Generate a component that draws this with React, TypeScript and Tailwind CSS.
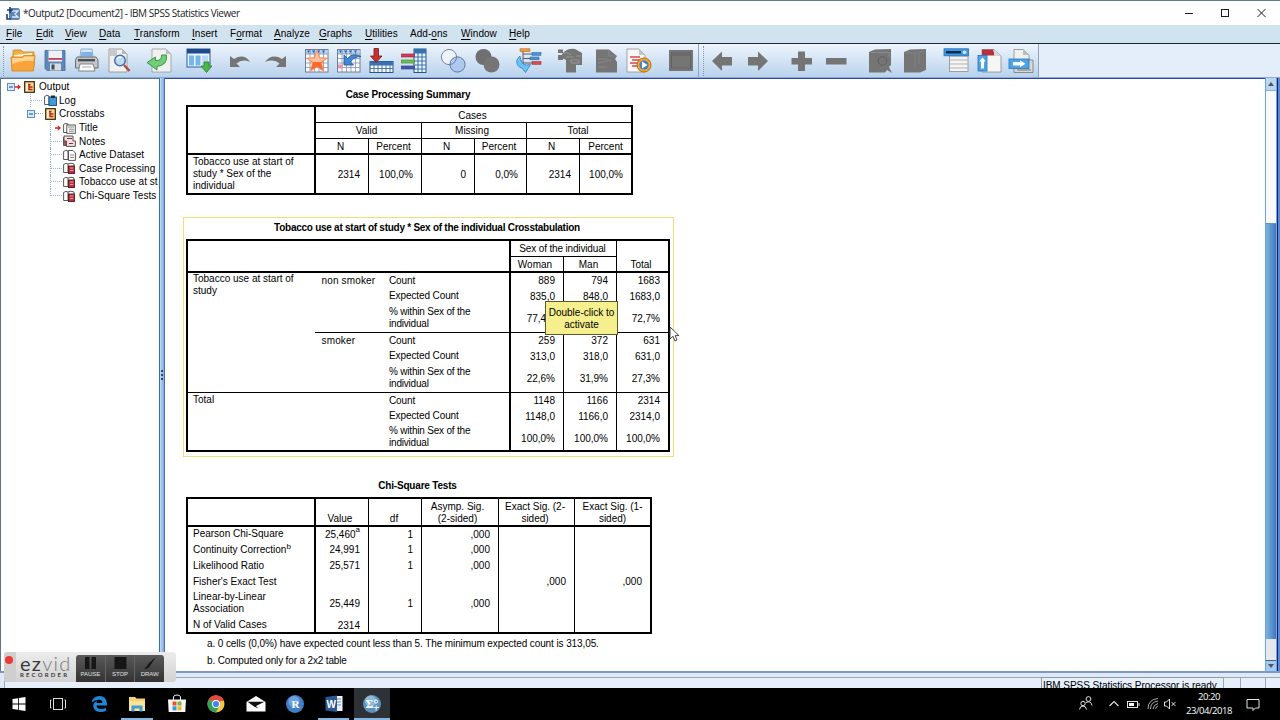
import type { ReactNode } from "react";
import clsx from "clsx";

type IconProps = { children: ReactNode };

const ToolIcon = ({ children }: IconProps) => (
    <svg width="26" height="26" viewBox="0 0 26 26" className="block shrink-0">
        {children}
    </svg>
);

const GRAY = "#757575";

/* Toolbar drawings */

const OpenIcon = () => (
    <ToolIcon>
        <path d="M3 5 V3 Q3 2 4 2 H11 L13 4 H24 V18 H3 Z" fill="#f0b043" stroke="#c98325" strokeWidth="0.8" />
        <path d="M4 7 L22 5 V12 H4 Z" fill="#fff3cf" />
        <path d="M1 9 H12 L14 7.5 H25 L23.5 23 H2 Z" fill="#f9a43a" stroke="#d47f1c" strokeWidth="0.8" />
        <path d="M2 10 H12.5 L14.5 8.5 H24 L23.6 13 Q12 12 2.4 16 Z" fill="#ffd391" />
    </ToolIcon>
);

const SaveIcon = () => (
    <ToolIcon>
        <path d="M2 2.5 H22 V22.5 H4 L2 20.5 Z" fill="#5f87b8" stroke="#466a99" strokeWidth="0.8" />
        <rect x="5.5" y="2.5" width="13.5" height="11" fill="#eef2f6" />
        <rect x="5.5" y="10" width="13.5" height="1.8" fill="#c2405a" />
        <rect x="7" y="15.5" width="11" height="7" fill="#d9dde2" />
        <rect x="8.5" y="16.5" width="3" height="5" fill="#3d4c60" />
    </ToolIcon>
);

const PrintIcon = () => (
    <ToolIcon>
        <path d="M7 1 H18 L19 9 H6 Z" fill="#d5e9fb" stroke="#7ba0c6" strokeWidth="0.8" />
        <path d="M7.5 4 H18 L18.6 8 H7 Z" fill="#7db3e6" />
        <path d="M3 9 H22 L24 12 V20 H1.5 V12 Z" fill="#c4c7ca" stroke="#606468" strokeWidth="0.9" />
        <rect x="4" y="11" width="17" height="2.4" fill="#4b4f53" />
        <path d="M6 16 H19 L21 23 H4.5 Z" fill="#fafafa" stroke="#6b6e72" strokeWidth="0.8" />
        <rect x="8" y="18" width="9" height="2" fill="#cfd3d8" />
    </ToolIcon>
);

const PreviewIcon = () => (
    <ToolIcon>
        <path d="M3 1 H16 L21 6 V24 H3 Z" fill="#f1f1f1" stroke="#8d8d8d" strokeWidth="0.8" />
        <path d="M3.5 1.5 H11 V8 H3.5 Z" fill="#c9c9c9" />
        <path d="M16 1 V6 H21 Z" fill="#b9b9b9" />
        <line x1="18" y1="17" x2="23.5" y2="23" stroke="#b8453b" strokeWidth="2.4" />
        <circle cx="14" cy="12.5" r="5.3" fill="#bcdcf8" stroke="#4771a8" strokeWidth="1.5" />
        <path d="M11 11 Q12.5 8.5 15.5 9.5" stroke="#fff" strokeWidth="1.4" fill="none" />
    </ToolIcon>
);

const ExportIcon = () => (
    <ToolIcon>
        <path d="M6 1 H20 L25 6 V24 H6 Z" fill="#f1f1f1" stroke="#9a9a9a" strokeWidth="0.8" />
        <path d="M20 1 V6 H25 Z" fill="#bdbdbd" />
        <path d="M20.5 7 Q22 17 11 18.5 V22 L1 14.5 L9.5 9 V12.5 Q16 13 15.5 7 Z" fill="#72cc78" stroke="#2f8f42" strokeWidth="0.9" />
    </ToolIcon>
);

const PivotIcon = () => (
    <ToolIcon>
        <rect x="1" y="1" width="23" height="18" fill="#eaf4fd" stroke="#2b5d9b" />
        <rect x="1" y="1" width="23" height="4.5" fill="#1f4a8c" />
        <rect x="3" y="7.5" width="5" height="10" fill="#75b6ea" />
        <rect x="9.5" y="7.5" width="5" height="10" fill="#75b6ea" />
        <rect x="16" y="7.5" width="6" height="10" fill="#b8daf4" />
        <path d="M18 14 H23 V18 H26 L20.5 24.5 L15 18 H18 Z" fill="#4db649" stroke="#2a7d2c" strokeWidth="0.8" />
    </ToolIcon>
);

const UndoIcon = () => (
    <ToolIcon>
        <path d="M3 8 V19 H13 L9.5 15.5 Q15 10.5 23 14 Q17 5 7 11 Z" fill={GRAY} />
    </ToolIcon>
);

const RedoIcon = () => (
    <ToolIcon>
        <path d="M23 8 V19 H13 L16.5 15.5 Q11 10.5 2 14 Q9 5 19 11 Z" fill={GRAY} />
    </ToolIcon>
);

const GridBase = () => (
    <>
        <rect x="1.5" y="1.5" width="22.5" height="22.5" fill="#fdfdfe" stroke="#6d7f99" />
        <rect x="2" y="2" width="21.5" height="4" fill="#b5d0ee" />
        <path d="M2 6 H24 M2 10.5 H24 M2 15 H24 M2 19.5 H24 M6 2 V24 M10.5 2 V24 M15 2 V24 M19.5 2 V24" stroke="#7f92ae" strokeWidth="0.8" />
        <path d="M3 2.5 H6 L4.5 5 Z M8 2.5 H11 L9.5 5 Z M13 2.5 H16 L14.5 5 Z M18 2.5 H21 L19.5 5 Z" fill="#2c62ad" />
    </>
);

const StarIcon = () => (
    <ToolIcon>
        <GridBase />
        <path d="M13 2 L15.8 9.5 L23.5 10 L17.6 15 L20 23.5 L13 19 L6 23.5 L8.4 15 L2.5 10 L10.2 9.5 Z" fill="#fb6a2b" stroke="#f7a57f" strokeWidth="0.7" />
        <path d="M13 3.5 L15.3 10.2 L22 10.5 L17 14 H8.5 L4 10.5 L10.7 10.2 Z" fill="#fdc09d" />
    </ToolIcon>
);

const GotoIcon = () => (
    <ToolIcon>
        <GridBase />
        <rect x="2" y="16.5" width="5" height="4" fill="#e896ac" />
        <path d="M8 7 V17 H17.5 L14.5 14 Q18 8.5 25 8.5 Q17 4 11.5 10.5 Z" fill="#3f88d6" stroke="#1d5598" strokeWidth="0.8" />
    </ToolIcon>
);

const InsertCaseIcon = () => (
    <ToolIcon>
        <rect x="2" y="13.5" width="23" height="11" fill="#f2f7fc" stroke="#27568c" />
        <rect x="2" y="13.5" width="23" height="4" fill="#3672b0" />
        <path d="M2 20.5 H25 M6 17 V24 M10 17 V24 M14 17 V24 M18 17 V24 M22 17 V24" stroke="#466f9f" strokeWidth="0.9" />
        <path d="M6 0.5 H10.5 V8 H14 L8.2 14.5 L2.5 8 H6 Z" fill="#c6302f" stroke="#7d1615" strokeWidth="0.8" />
    </ToolIcon>
);

const InsertVarIcon = () => (
    <ToolIcon>
        <rect x="13" y="1" width="12" height="23.5" fill="#eaf3fb" stroke="#27568c" />
        <rect x="13" y="1" width="12" height="4.5" fill="#3672b0" />
        <path d="M13 9 H25 M13 13 H25 M13 17 H25 M13 21 H25 M17 5 V24 M21 5 V24" stroke="#3f75ae" strokeWidth="1.1" />
        <rect x="0.5" y="6" width="13" height="3" fill="#d63a55" stroke="#8b2236" strokeWidth="0.6" />
        <rect x="0.5" y="12" width="13" height="3" fill="#6cc24e" stroke="#3d7d2a" strokeWidth="0.6" />
        <rect x="0.5" y="18" width="13" height="3" fill="#4a56b5" stroke="#2a3380" strokeWidth="0.6" />
    </ToolIcon>
);

const VennIcon = () => (
    <ToolIcon>
        <circle cx="9" cy="9" r="7.6" fill="#edf3fa" stroke="#7c8594" />
        <circle cx="17.5" cy="16.5" r="7.6" fill="#a9c4f0" fillOpacity="0.85" stroke="#5d75a6" />
        <path d="M16.5 9 A7.6 7.6 0 0 1 9.9 16.6" fill="none" stroke="#5d75a6" strokeWidth="0.8" />
    </ToolIcon>
);

const VennGrayIcon = () => (
    <ToolIcon>
        <circle cx="8.5" cy="9" r="8" fill="#6f6f6f" />
        <circle cx="16.5" cy="16.5" r="8" fill={GRAY} />
    </ToolIcon>
);

const SelectOutputIcon = () => (
    <ToolIcon>
        <path d="M7 2 V18 M7 6 H16 M7 10.5 H15 M7 15 H16" stroke="#4d4d4d" strokeWidth="0.9" fill="none" />
        <rect x="4" y="0.8" width="10" height="2.8" fill="#f1993a" stroke="#a95f15" strokeWidth="0.5" />
        <rect x="16" y="4.5" width="9" height="2.8" fill="#4b93dc" stroke="#265a95" strokeWidth="0.5" />
        <rect x="14" y="9" width="9" height="2.8" fill="#4b93dc" stroke="#265a95" strokeWidth="0.5" />
        <rect x="16" y="13.5" width="9" height="2.8" fill="#d84a51" stroke="#8b262b" strokeWidth="0.5" />
        <path d="M4 8 Q-1 12 1.5 17 Q3.5 20 6 20 L9.5 24.5 L14.5 16.5 L10.5 17 Q5 17 4 8 Z" fill="#6fc0f5" stroke="#2c83c7" strokeWidth="0.8" />
    </ToolIcon>
);

const GrayPagesIcon = () => (
    <ToolIcon>
        <path d="M1 1.5 H6 V5 H1 Z M1 7 H6 V12 H1 Z" fill={GRAY} />
        <path d="M5 6 Q10 0 18 1 L25 5 V17 H19 V24.5 H9 V12 L5 10 Z" fill={GRAY} />
        <path d="M9 9 H17 M19 8 H24 M14 12 H22 V15 H14 Z M7 5 Q11 4 14 7" stroke="#9b9b9b" strokeWidth="0.9" fill="none" />
    </ToolIcon>
);

const GrayDocIcon = () => (
    <ToolIcon>
        <path d="M2 1.5 H15 L23 8 L21 11 L23 14 V24.5 H2 Z" fill={GRAY} />
        <path d="M4 11 H14 M4 15 L18 12 M4 19 H13 M15 2 V8 H22" stroke="#8a8a8a" strokeWidth="0.9" fill="none" />
    </ToolIcon>
);

const RunScriptIcon = () => (
    <ToolIcon>
        <path d="M1 1 H13 L19 7 V24 H1 Z" fill="#f7f7f7" stroke="#939393" strokeWidth="0.8" />
        <path d="M13 1 V7 H19 Z" fill="#c4c4c4" />
        <path d="M4 9 H14 M6 12 H14 M4 15 H12 M6 18 H11" stroke="#d0494f" strokeWidth="1.3" />
        <circle cx="18" cy="17" r="7" fill="#f5a62c" stroke="#b76c12" />
        <circle cx="18" cy="17" r="4.6" fill="#3f83c5" />
        <path d="M16 13.5 L21.5 17 L16 20.5 Z" fill="#fff" />
    </ToolIcon>
);

const GrayWindowIcon = () => (
    <ToolIcon>
        <rect x="1" y="2" width="24" height="21" fill={GRAY} />
        <rect x="3.5" y="7" width="19" height="13" fill="none" stroke="#5c5c5c" strokeWidth="0.8" />
        <path d="M3 5 H23" stroke="#5c5c5c" strokeWidth="0.8" />
    </ToolIcon>
);

const LeftIcon = () => (
    <ToolIcon>
        <path d="M3 13 L13 3.5 V9 H23 V17.5 H13 V23 Z" fill={GRAY} />
    </ToolIcon>
);

const RightIcon = () => (
    <ToolIcon>
        <path d="M23 13 L13 3.5 V9 H3 V17.5 H13 V23 Z" fill={GRAY} />
    </ToolIcon>
);

const PlusIcon = () => (
    <ToolIcon>
        <path d="M10 3.5 H17 V10 H24 V16.5 H17 V23 H10 V16.5 H3.5 V10 H10 Z" fill={GRAY} />
    </ToolIcon>
);

const MinusIcon = () => (
    <ToolIcon>
        <rect x="3" y="10" width="20.5" height="6.5" fill={GRAY} />
    </ToolIcon>
);

const GrayBookIcon = () => (
    <ToolIcon>
        <path d="M2 4 L8 1.5 L24 1 V17 L22 19 L25 25 L20 22 L18 24.5 H2 Z" fill={GRAY} />
        <path d="M4 4.5 H22 V9" stroke="#8d8d8d" strokeWidth="0.9" fill="none" />
        <circle cx="15.5" cy="13" r="4.2" fill="none" stroke="#606060" strokeWidth="1.1" />
    </ToolIcon>
);

const GrayBookPlainIcon = () => (
    <ToolIcon>
        <path d="M1 4 L7 1.5 L23 1 V22 L17 24.5 H1 Z" fill={GRAY} />
        <path d="M2 4.5 L12 5 L22 3 M12 5 V20 M16 4.5 V16" stroke="#858585" strokeWidth="0.9" fill="none" />
    </ToolIcon>
);

const HeadingIcon = () => (
    <ToolIcon>
        <rect x="6.5" y="8" width="18.5" height="15.5" fill="#f4f4f4" stroke="#8c8c8c" strokeWidth="0.8" />
        <path d="M7 12 H25 M7 16 H25 M7 20 H25" stroke="#b3b3b3" />
        <rect x="1" y="0.8" width="24.5" height="7" fill="#4298e0" stroke="#2170b4" strokeWidth="0.8" />
        <rect x="3" y="3" width="15" height="2.5" fill="#0c2c58" />
        <circle cx="21.5" cy="4.3" r="1.8" fill="#d6ecfd" />
    </ToolIcon>
);

const InsertTitleIcon = () => (
    <ToolIcon>
        <path d="M5 1.5 H17 L24 8 V24 H5 Z" fill="#f6f6f6" stroke="#8c8c8c" strokeWidth="0.8" />
        <path d="M5 1.5 H16 L18 7.5 H5 Z" fill="#b5303c" />
        <path d="M17 1.5 V8 H24 Z" fill="#d6d6d6" />
        <rect x="1" y="7.5" width="9" height="15.5" fill="#4ba3e8" stroke="#2574b8" strokeWidth="0.8" />
        <path d="M5.5 9.5 L8.8 13.5 H7 V20.5 H4 V13.5 H2.2 Z" fill="#fff" />
    </ToolIcon>
);

const InsertTextIcon = () => (
    <ToolIcon>
        <path d="M6 1.5 H15 L21 7 V14 H6 Z" fill="#f1f1f1" stroke="#8c8c8c" strokeWidth="0.8" />
        <path d="M15 1.5 V7 H21 Z" fill="#bcbcbc" />
        <path d="M6 12 H25 V24.5 H6 Z" fill="#d8d8d8" stroke="#777" strokeWidth="0.8" />
        <path d="M9 22 H23" stroke="#777" />
        <rect x="1" y="11" width="20" height="9.5" fill="#4ba3e8" stroke="#2574b8" strokeWidth="0.8" />
        <path d="M5 14 H12 V12.2 L17.5 15.7 L12 19.2 V17.4 H5 Z" fill="#fff" />
    </ToolIcon>
);

const outputTools = [
    { id: "open", gap: "ml-[6px]", Icon: OpenIcon },
    { id: "save", gap: "ml-[7px]", Icon: SaveIcon },
    { id: "print", gap: "ml-[5px]", Icon: PrintIcon },
    { id: "preview", gap: "ml-[6px]", Icon: PreviewIcon },
    { id: "export", gap: "ml-[14px]", Icon: ExportIcon },
    { id: "pivot", gap: "ml-[14px]", Icon: PivotIcon },
    { id: "undo", gap: "ml-[15px]", Icon: UndoIcon },
    { id: "redo", gap: "ml-[10px]", Icon: RedoIcon },
    { id: "goto-data", gap: "ml-[15px]", Icon: StarIcon },
    { id: "goto-case", gap: "ml-[6px]", Icon: GotoIcon },
    { id: "insert-case", gap: "ml-[6px]", Icon: InsertCaseIcon },
    { id: "variables", gap: "ml-[7px]", Icon: InsertVarIcon },
    { id: "sets", gap: "ml-[13px]", Icon: VennIcon },
    { id: "all-vars", gap: "ml-[9px]", Icon: VennGrayIcon },
    { id: "select", gap: "ml-[15px]", Icon: SelectOutputIcon },
    { id: "pages", gap: "ml-[15px]", Icon: GrayPagesIcon },
    { id: "doc", gap: "ml-[11px]", Icon: GrayDocIcon },
    { id: "script", gap: "ml-[6px]", Icon: RunScriptIcon },
    { id: "window", gap: "ml-[16px]", Icon: GrayWindowIcon },
];

const outlineTools = [
    { id: "promote", gap: "ml-[5px]", Icon: LeftIcon },
    { id: "demote", gap: "ml-[10px]", Icon: RightIcon },
    { id: "expand", gap: "ml-[17px]", Icon: PlusIcon },
    { id: "collapse", gap: "ml-[9px]", Icon: MinusIcon },
    { id: "show", gap: "ml-[18px]", Icon: GrayBookIcon },
    { id: "hide", gap: "ml-[10px]", Icon: GrayBookPlainIcon },
    { id: "heading", gap: "ml-[14px]", Icon: HeadingIcon },
    { id: "title", gap: "ml-[8px]", Icon: InsertTitleIcon },
    { id: "text", gap: "ml-[5px]", Icon: InsertTextIcon },
];

const menus = [
    { pre: "", key: "F", post: "ile", w: "w-[30px]" },
    { pre: "", key: "E", post: "dit", w: "w-[29px]" },
    { pre: "", key: "V", post: "iew", w: "w-[34px]" },
    { pre: "", key: "D", post: "ata", w: "w-[35px]" },
    { pre: "", key: "T", post: "ransform", w: "w-[58px]" },
    { pre: "", key: "I", post: "nsert", w: "w-[38px]" },
    { pre: "F", key: "o", post: "rmat", w: "w-[44px]" },
    { pre: "", key: "A", post: "nalyze", w: "w-[45px]" },
    { pre: "", key: "G", post: "raphs", w: "w-[46px]" },
    { pre: "", key: "U", post: "tilities", w: "w-[45px]" },
    { pre: "Add-", key: "o", post: "ns", w: "w-[51px]" },
    { pre: "", key: "W", post: "indow", w: "w-[48px]" },
    { pre: "", key: "H", post: "elp", w: "w-[30px]" },
];

const TitleBar = () => (
    <header className="flex h-[25px] items-center border-t border-[#5f7c84] bg-white">
        <svg width="15" height="15" viewBox="0 0 15 15" className="ml-[6px] shrink-0">
            <rect x="3" y="2" width="11" height="12" rx="2.5" fill="#5d86b4" />
            <path d="M6 5 H12 L9 8 L12 11 H6" fill="none" stroke="#dbe8f5" strokeWidth="1.3" />
            <path d="M1 4 H7 M4 1 V7 M1 8 V13 H5" stroke="#1f3e6b" strokeWidth="1.6" fill="none" />
        </svg>
        <h1 className="ml-[2px] font-['Open_Sans',sans-serif] text-[10px] tracking-[-0.43px] whitespace-nowrap text-[#222]">
            *Output2 [Document2] - IBM SPSS Statistics Viewer
        </h1>
        <svg width="90" height="12" viewBox="0 0 90 12" className="mr-[8px] ml-auto" fill="none" stroke="#1c1c1c">
            <path d="M3 6.5 H11" />
            <rect x="39.5" y="2.5" width="7" height="7" />
            <path d="M75.5 2 L83.5 10 M83.5 2 L75.5 10" />
        </svg>
    </header>
);

const MenuBar = () => (
    <nav className="flex h-[19px] items-center border-b border-[#1d2733] bg-[#d2e3f0] pb-[1px] pl-[6px]">
        {menus.map((m) => (
            <span key={m.key + m.post} className={clsx("text-[10px] tracking-[0.05px]", m.w)}>
                {m.pre}
                <span className="underline underline-offset-2">{m.key}</span>
                {m.post}
            </span>
        ))}
    </nav>
);

const Toolbar = () => (
    <div className="flex h-[33px] bg-[#e4eefb]">
        <div className="flex w-[699px] items-center border-r border-[#8fa5bb] bg-linear-to-b from-[#eef5fd] to-[#b9d2ec]">
            <div className="ml-[3px] h-[30px] w-px border-l border-dotted border-[#8798ab]" />
            {outputTools.map(({ id, gap, Icon }) => (
                <div key={id} className={gap}>
                    <Icon />
                </div>
            ))}
        </div>
        <div className="flex w-[340px] items-center border-r border-[#8fa5bb] bg-linear-to-b from-[#eef5fd] to-[#b9d2ec]">
            <div className="ml-[4px] h-[30px] w-px border-l border-dotted border-[#8798ab]" />
            {outlineTools.map(({ id, gap, Icon }) => (
                <div key={id} className={gap}>
                    <Icon />
                </div>
            ))}
        </div>
    </div>
);

/* Outline tree */

const Toggle = () => (
    <svg width="8" height="8" viewBox="0 0 8 8" className="shrink-0">
        <rect x="0.5" y="0.5" width="7" height="7" fill="#d6e9fa" stroke="#5b8fc4" />
        <path d="M2 4 H6" stroke="#1f4f86" />
    </svg>
);

const RedArrow = () => (
    <svg width="6" height="6" viewBox="0 0 6 6" className="shrink-0">
        <path d="M0 2.2 H2.8 V0.3 L6 3 L2.8 5.7 V3.8 H0 Z" fill="#d8232a" />
    </svg>
);

const RootIcon = () => (
    <svg width="11" height="12" viewBox="0 0 11 12" className="shrink-0">
        <rect x="0.7" y="0.7" width="9.6" height="10.6" fill="#fbd98a" stroke="#33240e" strokeWidth="1.2" />
        <path d="M3 2 V10" stroke="#fff" />
        <path d="M4 3.5 H6.5 M5 3 V8.5 H8.5 M5 6 H8.5" stroke="#b3261b" strokeWidth="1.4" fill="none" />
    </svg>
);

const BookIcon = ({ kind }: { kind: string }) => (
    <svg width="13" height="12" viewBox="0 0 13 12" className="shrink-0">
        <path d="M0.6 10.5 V2.5 Q3 0.5 5 2 V10.5 Z" fill={kind === "note" ? "#b5505c" : "#fff"} stroke="#444" strokeWidth="0.9" />
        {kind === "log" && (
            <>
                <rect x="5" y="3" width="7.5" height="8.5" fill="#3f9bd8" stroke="#1b4c75" strokeWidth="0.9" />
                <path d="M7 1.5 H11 V4 H7 Z" fill="#1c2c3c" />
            </>
        )}
        {kind === "title" && (
            <>
                <rect x="3.8" y="3" width="8.5" height="8.3" fill="#fff" stroke="#444" strokeWidth="0.9" />
                <path d="M5 5 H11 M6 7.2 H11 M6 9.2 H11" stroke="#777" strokeWidth="0.9" />
            </>
        )}
        {kind === "note" && (
            <>
                <path d="M1 1 H10 V6 H12.4 V11.4 H3.5 V6 H1 Z" fill="#f2dfe0" stroke="#444" strokeWidth="0.9" />
                <path d="M4 3.5 H9 M6 8.5 H10" stroke="#8d2835" />
            </>
        )}
        {kind === "dataset" && (
            <>
                <path d="M5.5 1.5 H10 L12.4 4 V11.4 H5.5 Z" fill="#fff" stroke="#444" strokeWidth="0.9" />
                <path d="M7 6 H11 M7 8.5 H11" stroke="#777" strokeWidth="0.9" />
            </>
        )}
        {kind === "table" && (
            <>
                <path d="M5 2 Q8 0.4 11 2 V4" stroke="#555" fill="none" />
                <rect x="5.5" y="4" width="6" height="7.5" fill="#b9313d" stroke="#54141b" strokeWidth="0.9" />
                <path d="M7 6 H10.5 M7 8.5 H10.5" stroke="#e9b9bd" strokeWidth="0.8" />
            </>
        )}
    </svg>
);

const outputItems = [
    { label: "Title", kind: "title" },
    { label: "Notes", kind: "note" },
    { label: "Active Dataset", kind: "dataset" },
    { label: "Case Processing", kind: "table" },
    { label: "Tobacco use at st", kind: "table" },
    { label: "Chi-Square Tests", kind: "table" },
];

const Outline = () => (
    <aside className="w-[160px] shrink-0 overflow-hidden border-x border-t border-[#5a7590] border-r-[#3a6ca8] bg-white pt-[1px] text-[10px] tracking-[0.05px] whitespace-nowrap">
        <div className="flex h-[13.6px] items-center pl-[6px]">
            <Toggle />
            <RedArrow />
            <span className="ml-[3px] flex items-center gap-[4px]">
                <RootIcon />
                Output
            </span>
        </div>
        <div className="ml-[29px] flex h-[13.6px] items-center border-l border-dotted border-[#8fb3d6]">
            <div className="mr-[2px] w-[11px] border-t border-dotted border-[#8fb3d6]" />
            <BookIcon kind="log" />
            <span className="ml-[2px]">Log</span>
        </div>
        <div className="flex h-[13.6px] items-center pl-[26px]">
            <Toggle />
            <div className="mr-[2px] w-[8px] border-t border-dotted border-[#8fb3d6]" />
            <RootIcon />
            <span className="ml-[3px]">Crosstabs</span>
        </div>
        {outputItems.map((item, i) => (
            <div key={item.label} className="flex h-[13.6px] pl-[49px]">
                <div className={clsx("border-l border-dotted border-[#8fb3d6]", i === outputItems.length - 1 ? "h-[7px]" : "h-full")} />
                <div className="flex items-center">
                    {i === 0 ? (
                        <div className="flex w-[12px] items-center justify-end pr-[2px]">
                            <RedArrow />
                        </div>
                    ) : (
                        <div className="mr-[1px] w-[11px] border-t border-dotted border-[#8fb3d6]" />
                    )}
                    <BookIcon kind={item.kind} />
                    <span className="ml-[3px]">{item.label}</span>
                </div>
            </div>
        ))}
    </aside>
);

/* Pivot tables */

const TableTitle = ({ children, className }: { children: ReactNode; className: string }) => (
    <h2 className={clsx("h-[14px] text-center text-[10px] leading-[14px] font-bold whitespace-nowrap", className)}>{children}</h2>
);

const Cell = ({ children, className }: { children?: ReactNode; className?: string }) => (
    <div className={clsx("border-black", className)}>{children}</div>
);

const HEAD = "flex items-center justify-center";
const NUM = "flex items-center justify-end pr-[8px]";

const caseValues = ["2314", "100,0%", "0", "0,0%", "2314", "100,0%"];

const CaseProcessing = () => (
    <section className="w-[447px]">
        <TableTitle className="mb-[3px] pr-[3px] tracking-[-0.19px]">Case Processing Summary</TableTitle>
        <div className="grid grid-cols-[128px_53px_53px_53px_52px_53px_51px] grid-rows-[16px_16px_16px_38px] border-2 border-black">
            <Cell className="row-span-3 border-r-2 border-b-2" />
            <Cell className={clsx(HEAD, "col-span-6 border-b pt-[1px] pr-[2px]")}>Cases</Cell>
            <Cell className={clsx(HEAD, "col-span-2 border-r border-b pr-[4px]")}>Valid</Cell>
            <Cell className={clsx(HEAD, "col-span-2 border-r border-b pr-[4px]")}>Missing</Cell>
            <Cell className={clsx(HEAD, "col-span-2 border-b pr-[2px]")}>Total</Cell>
            {["N", "Percent", "N", "Percent", "N", "Percent"].map((h, i) => (
                <Cell key={i} className={clsx(HEAD, "border-b-2 pt-[1px]", i < 5 && "border-r pr-[3px]")}>{h}</Cell>
            ))}
            <Cell className="border-r-2 pt-[1px] pl-[5px] leading-[12px] whitespace-nowrap">
                Tobacco use at start of
                <br />
                study * Sex of the
                <br />
                individual
            </Cell>
            {caseValues.map((v, i) => (
                <Cell key={i} className={clsx(NUM, "pt-[1px]", i < 5 && "border-r")}>{v}</Cell>
            ))}
        </div>
    </section>
);

const crosstab = [
    {
        group: "non smoker",
        rows: [
            ["889", "794", "1683"],
            ["835,0", "848,0", "1683,0"],
            ["77,4%", "68,1%", "72,7%"],
        ],
    },
    {
        group: "smoker",
        rows: [
            ["259", "372", "631"],
            ["313,0", "318,0", "631,0"],
            ["22,6%", "31,9%", "27,3%"],
        ],
    },
    {
        group: "",
        rows: [
            ["1148", "1166", "2314"],
            ["1148,0", "1166,0", "2314,0"],
            ["100,0%", "100,0%", "100,0%"],
        ],
    },
];

const statLabels = ["Count", "Expected Count", "% within Sex of the individual"];

const Crosstabulation = () => (
    <section className="relative mt-[22px] -ml-[3px] h-[240px] w-[491px] border border-[#f1dc78] pt-[3px] pl-[2px]">
        <TableTitle className="mb-[4px] pr-[5px] tracking-[-0.26px]">Tobacco use at start of study * Sex of the individual Crosstabulation</TableTitle>
        <div className="grid w-[484px] grid-cols-[127px_68px_128px_53px_53px_51px] grid-rows-[16px_16px_15px_16px_29px_15px_16px_29px_15px_16px_26px] border-2 border-black">
            <Cell className="col-span-3 row-span-2 border-r-2 border-b-2" />
            <Cell className={clsx(HEAD, "col-span-2 border-r border-b pr-[2px] tracking-[-0.15px] whitespace-nowrap")}>Sex of the individual</Cell>
            <Cell className="row-span-2 flex items-end justify-center border-b-2 pr-[3px] leading-[13px]">Total</Cell>
            <Cell className={clsx(HEAD, "border-r border-b-2 pr-[4px]")}>Woman</Cell>
            <Cell className={clsx(HEAD, "border-r border-b-2 pr-[3px]")}>Man</Cell>

            <Cell className="col-start-1 row-span-6 row-start-3 border-b pl-[5px] leading-[12px] whitespace-nowrap">
                Tobacco use at start of
                <br />
                study
            </Cell>
            <Cell className="col-span-2 col-start-1 row-span-3 row-start-9 pl-[5px] leading-[14px]">Total</Cell>
            {crosstab.map(({ group, rows }) => (
                <div key={group} className="contents">
                    {group && <Cell className="col-start-2 row-span-3 border-b pl-[6.5px] tracking-[0.15px] whitespace-nowrap">{group}</Cell>}
                    {rows.map((values, r) => {
                        const line = r === 2 && group !== "" && "border-b";
                        return (
                            <div key={r} className="contents">
                                <Cell className={clsx("col-start-3 flex items-center border-r-2 pr-[20px] pl-[6px]", line)}>
                                    <span className={clsx("leading-[12px]", r === 2 ? "-mt-px tracking-[-0.2px]" : "tracking-[-0.1px]")}>
                                        {statLabels[r]}
                                    </span>
                                </Cell>
                                {values.map((v, c) => (
                                    <Cell key={c} className={clsx(NUM, c < 2 && "border-r", line, r === 2 && group === "" && "pt-[2px]")}>{v}</Cell>
                                ))}
                            </div>
                        );
                    })}
                </div>
            ))}
        </div>

        {/* Hint shown while hovering the table */}
        <div className="absolute top-[83px] left-[361px] flex h-[34px] w-[73px] items-center justify-center border border-[#5c5a2c] bg-[#f5f08d] pt-[2px] text-center leading-[12px]">
            Double-click to
            <br />
            activate
        </div>
        <svg width="12" height="18" viewBox="0 0 12 18" className="absolute top-[108px] left-[485px]">
            <path d="M1 1 V13 L4 10.3 L6 15 L8 14 L6.2 9.6 H10 Z" fill="#fff" stroke="#333" strokeWidth="0.9" />
        </svg>
    </section>
);

const chiHeads = [
    { lines: ["Value"], pad: "pr-[4px] border-r" },
    { lines: ["df"], pad: "pr-[2px] border-r" },
    { lines: ["Asymp. Sig.", "(2-sided)"], pad: "pr-[5px] border-r" },
    { lines: ["Exact Sig. (2-", "sided)"], pad: "pr-[3px] border-r" },
    { lines: ["Exact Sig. (1-", "sided)"], pad: "" },
];

const chiRows = [
    { label: "Pearson Chi-Square", value: "25,460", sup: "a", df: "1", asymp: ",000", exact: "" },
    { label: "Continuity Correction", labelSup: "b", value: "24,991", df: "1", asymp: ",000", exact: "" },
    { label: "Likelihood Ratio", value: "25,571", df: "1", asymp: ",000", exact: "" },
    { label: "Fisher's Exact Test", value: "", df: "", asymp: "", exact: ",000" },
    { label: "Linear-by-Linear Association", value: "25,449", df: "1", asymp: ",000", exact: "" },
    { label: "N of Valid Cases", value: "2314", df: "", asymp: "", exact: "" },
];

const Sup = ({ children }: IconProps) => <span className="relative -top-[4px] text-[8px] leading-none">{children}</span>;

const ChiSquare = () => (
    <section className="mt-[22px] w-[466px]">
        <TableTitle className="mb-[4px] pr-[3px] tracking-[-0.19px]">Chi-Square Tests</TableTitle>
        <div className="grid grid-cols-[128px_53px_53px_77px_76px_75px] grid-rows-[28px_14px_16px_16px_16px_28px_15px] border-2 border-black">
            <Cell className="border-r-2 border-b-2" />
            {chiHeads.map(({ lines, pad }, i) => (
                <Cell key={i} className={clsx("flex flex-col items-center justify-end border-b-2 leading-[12px] whitespace-nowrap", pad)}>
                    {lines.map((line) => (
                        <span key={line}>{line}</span>
                    ))}
                </Cell>
            ))}
            {chiRows.map((row, i) => (
                <div key={row.label} className="contents">
                    <Cell className={clsx("flex items-center border-r-2 pr-[20px] pl-[5px]", i > 0 && i !== 4 && "pt-[1px]")}>
                        <span className={clsx("leading-[12px]", i !== 4 && "whitespace-nowrap")}>
                            {row.label}
                            {row.labelSup && <Sup>{row.labelSup}</Sup>}
                        </span>
                    </Cell>
                    <Cell className={clsx(NUM, "border-r", i > 4 && "pt-[1px]")}>
                        {row.value}
                        {row.sup && <Sup>{row.sup}</Sup>}
                    </Cell>
                    <Cell className={clsx(NUM, "border-r")}>{row.df}</Cell>
                    <Cell className={clsx(NUM, "border-r")}>{row.asymp}</Cell>
                    <Cell className={clsx(NUM, "border-r pt-[1px]")}>{row.exact}</Cell>
                    <Cell className={clsx(NUM, "pt-[1px]")}>{row.exact}</Cell>
                </div>
            ))}
        </div>
        <p className="mt-[3px] pl-[21px] leading-[14px] tracking-[-0.1px] whitespace-nowrap">
            a. 0 cells (0,0%) have expected count less than 5. The minimum expected count is 313,05.
        </p>
        <p className="mt-[3px] pl-[21px] leading-[14px] tracking-[-0.15px]">b. Computed only for a 2x2 table</p>
    </section>
);

const Scrollbar = () => (
    <div className="flex w-[12px] shrink-0 flex-col border-x border-[#6ea6cf] bg-[#f7f9fd]">
        <div className="flex h-[13px] items-center justify-center border-b border-[#7fb0da] bg-[#b9d7f5]">
            <svg width="6" height="4" viewBox="0 0 6 4">
                <path d="M0 4 L3 0 L6 4 Z" fill="#555" />
            </svg>
        </div>
        <div className="mt-[132px] h-[416px] border-t border-[#5e93c8] bg-linear-to-r from-[#7fb2e2] to-[#3f78bd]" />
        <div className="flex-1 bg-[#e6e8ef]" />
        <div className="flex h-[11px] items-center justify-center border-t border-[#44607c] bg-[#9fcbf5]">
            <svg width="6" height="4" viewBox="0 0 6 4">
                <path d="M0 0 H6 L3 4 Z" fill="#555" />
            </svg>
        </div>
    </div>
);

const Recorder = () => (
    <div className="absolute top-[652px] left-[4px] flex h-[30px] w-[172px] overflow-hidden rounded-[3px] bg-linear-to-b from-[#ececec] to-[#d2d2d2]">
        <div className="w-[12px] bg-[#cfcfcf] pt-[4px] pl-[1px]">
            <div className="size-[8px] rounded-full bg-[#ee3a35]" />
        </div>
        <div className="flex w-[60px] flex-col pt-[3px] pl-[4px] font-['Lato',sans-serif] text-[#3a3a3a]">
            <span className="text-[20px] leading-[16px] tracking-[1.3px]">
                ez<span className="font-light text-[#777]">vid</span>
            </span>
            <span className="text-[6px] leading-[7px] font-bold tracking-[2.2px]">RECORDER</span>
        </div>
        <div className="mt-[3px] flex w-[88px] rounded-t-[3px] bg-linear-to-b from-[#5a5a5a] to-[#333] text-[6px] leading-[9px] text-[#e0e0e0]">
            <div className="flex flex-1 flex-col items-center border-r border-[#666]">
                <svg width="13" height="15" viewBox="0 0 13 15">
                    <path d="M1 2 H5.5 V14 H1 Z M7.5 2 H12 V14 H7.5 Z" fill="#161616" />
                </svg>
                PAUSE
            </div>
            <div className="flex flex-1 flex-col items-center border-r border-[#666]">
                <svg width="13" height="15" viewBox="0 0 13 15">
                    <rect x="0.5" y="2" width="12" height="12" fill="#161616" />
                </svg>
                STOP
            </div>
            <div className="flex flex-1 flex-col items-center">
                <svg width="14" height="15" viewBox="0 0 14 15">
                    <path d="M13 2 L6 8 L4 11 L1 14 Q6 14 7.5 10 Z" fill="#161616" />
                </svg>
                DRAW
            </div>
        </div>
    </div>
);

const StatusBar = () => (
    <footer className="flex h-[15px] bg-[#dfe9f5] pt-[4px]">
        <div className="ml-[4px] flex-1 overflow-hidden border-t border-l border-[#9aa7b5] bg-[#e6effa]" />
        <div className="h-[11px] w-[182px] overflow-hidden border-t border-l border-[#8d99a6] bg-[#e6effa] pl-[1px] leading-[15px] tracking-[-0.05px] whitespace-nowrap">
            IBM SPSS Statistics Processor is ready
        </div>
        <div className="w-[17px] border-t border-l border-[#9aa7b5] bg-[#e6effa]" />
        <div className="w-[25px] border-t border-l border-[#9aa7b5] bg-[#e6effa]" />
        <div className="w-[15px] border-t border-l border-[#9aa7b5] bg-[#e6effa]" />
    </footer>
);

/* Windows taskbar */

const taskIcons = [
    {
        id: "start",
        w: "w-[38px]",
        state: "",
        art: <path d="M3.5 6 L9 5.2 V10.6 H3.5 Z M9.8 5 L16.5 4 V10.6 H9.8 Z M3.5 11.4 H9 V16.8 L3.5 16 Z M9.8 11.4 H16.5 V18 L9.8 17 Z" fill="#fff" />,
    },
    {
        id: "taskview",
        w: "w-[39px]",
        state: "",
        art: (
            <g fill="none" stroke="#ddd" strokeWidth="1">
                <rect x="5.5" y="5.5" width="9" height="11" />
                <path d="M3.5 7 H2.5 V15 H3.5 M16.5 7 H17.5 V15 H16.5" />
            </g>
        ),
    },
    {
        id: "edge",
        w: "w-[44px]",
        state: "",
        art: (
            <path
                d="M2.5 9.5 Q4 3 10.5 3 Q17.5 3.3 18 10.5 V12.5 H7.5 Q8 16 12 16 Q15 16 17 14.8 V17.8 Q14.5 19.2 11 19 Q4.5 18.6 4.2 13 Q4.3 9.5 8.3 7.8 Q7.6 8.8 7.5 10 H13.5 Q13.3 6.8 10 6.8 Q6 6.6 2.5 9.5 Z"
                fill="#1d86d8"
            />
        ),
    },
    {
        id: "explorer",
        w: "w-[32px]",
        state: "open",
        art: (
            <>
                <path d="M2 4 H8 L9.5 5.5 H18 V18 H2 Z" fill="#f6d271" />
                <path d="M2 8 H18 V18 H2 Z" fill="#fbe39b" />
                <path d="M4.5 18.5 V12.5 H15.5 V18.5 H12.5 V15.5 H7.5 V18.5 Z" fill="#3e9fd2" />
            </>
        ),
    },
    {
        id: "store",
        w: "w-[47px]",
        state: "",
        art: (
            <>
                <path d="M6.5 7 V4 Q6.5 2 10 2 Q13.5 2 13.5 4 V7" fill="none" stroke="#eee" />
                <path d="M1 6.5 H19 L18.3 19 H1.7 Z" fill="#f6f6f6" />
                <rect x="5.5" y="8.5" width="4" height="4" fill="#e8542f" />
                <rect x="10.5" y="8.5" width="4" height="4" fill="#7db83a" />
                <rect x="5.5" y="13.3" width="4" height="4" fill="#2c9fd8" />
                <rect x="10.5" y="13.3" width="4" height="4" fill="#f2b62f" />
            </>
        ),
    },
    {
        id: "chrome",
        w: "w-[32px]",
        state: "",
        art: (
            <>
                <circle cx="10" cy="11" r="8.5" fill="#f4c63d" />
                <path d="M10 11 L2.64 6.75 A8.5 8.5 0 0 1 17.36 6.75 Z" fill="#dd4b3e" />
                <path d="M10 11 L2.64 6.75 A8.5 8.5 0 0 0 10 19.5 L13 13 Z" fill="#2fa35a" />
                <path d="M2.64 6.75 A8.5 8.5 0 0 1 18 8 H10 Z" fill="#dd4b3e" />
                <circle cx="10" cy="11" r="4" fill="#fff" />
                <circle cx="10" cy="11" r="3.1" fill="#4285f4" />
            </>
        ),
    },
    {
        id: "mail",
        w: "w-[47px]",
        state: "",
        art: (
            <>
                <path d="M0.5 9 L10 3 L19.5 9 V18.5 H0.5 Z" fill="#fff" />
                <path d="M1.5 8.8 H18.5 L10 13 L12.5 15.5 L8 13.5 Z" fill="#111" />
            </>
        ),
    },
    {
        id: "r",
        w: "w-[31px]",
        state: "",
        art: (
            <>
                <circle cx="10" cy="11" r="9" fill="#3f7fc6" />
                <circle cx="9" cy="8.5" r="5.5" fill="#6ba3de" />
                <text x="10.5" y="15" fontSize="11" fontWeight="bold" fill="#fff" textAnchor="middle" fontFamily="Liberation Serif">
                    R
                </text>
            </>
        ),
    },
    {
        id: "word",
        w: "ml-[8px] w-[31px]",
        state: "open",
        art: (
            <>
                <rect x="8" y="3" width="10.5" height="15" fill="#f4f7fb" />
                <path d="M12 6 H17 M12 9 H17 M12 12 H17" stroke="#5b86c2" />
                <path d="M1.5 4 L13 2.5 V19 L1.5 17.5 Z" fill="#2b5797" />
                <text x="7.2" y="14.5" fontSize="10" fontWeight="bold" fill="#fff" textAnchor="middle" fontFamily="Liberation Sans">
                    W
                </text>
                <path d="M13 12 L17.5 14.5 V18 H13.5 Z" fill="#e9eef6" />
            </>
        ),
    },
    {
        id: "spss",
        w: "ml-[5px] w-[36px]",
        state: "active",
        art: (
            <>
                <circle cx="10" cy="11" r="9" fill="#5d92bd" />
                <circle cx="8.5" cy="8" r="5.5" fill="#8fb9d8" />
                <text x="7.5" y="15" fontSize="12" fontWeight="bold" fill="#fff" textAnchor="middle" fontFamily="Liberation Serif">
                    Σ
                </text>
                <circle cx="14" cy="8.5" r="1.6" fill="none" stroke="#fff" />
                <path d="M11.5 14.5 H17 M14.2 12 V17.5" stroke="#e4f0f8" />
            </>
        ),
    },
];

const Taskbar = () => (
    <div className="flex h-[32px] bg-black text-white">
        {taskIcons.map(({ id, w, state, art }) => (
            <div
                key={id}
                className={clsx(
                    "flex shrink-0 justify-center border-b-2",
                    w,
                    state === "active" && "bg-[#2e3236]",
                    state ? "border-[#86b5df]" : "border-transparent",
                )}
            >
                <svg width="20" height="22" viewBox="0 0 20 22" className="mt-[5px]">
                    {art}
                </svg>
            </div>
        ))}
        <svg width="110" height="20" viewBox="0 0 110 20" className="mt-[6px] -mr-[2px] ml-auto" fill="none" stroke="#e2e2e2">
            <circle cx="6" cy="9.5" r="2.2" />
            <circle cx="11.5" cy="5" r="2.4" />
            <path d="M2.5 15.5 Q3 12 6 12 Q9 12 9.5 15.5 M8.8 8.6 Q14 6 15 11.5" />
            <path d="M32.5 12 L37 7.5 L41.5 12" strokeWidth="1.2" />
            <rect x="50.5" y="7.5" width="10" height="6" />
            <rect x="52" y="9" width="5" height="3" fill="#fff" stroke="none" />
            <path d="M62 9 V12" />
            <g strokeWidth="0.9" stroke="#bcbcbc">
                <path d="M71 15 Q71 5.5 81 4.5 M73.5 15 Q73.5 8 81 7 M76 15 Q76.5 10.5 81 9.5 M78.5 15 Q79 12.5 81 12" />
            </g>
            <path d="M87.5 8 H89.5 L92.5 5 V15 L89.5 12 H87.5 Z" />
            <path d="M94.5 8 L98.5 12 M98.5 8 L94.5 12" />
        </svg>
        <div className="w-[48px] pt-[2px] text-center font-['Open_Sans',sans-serif] text-[9.5px] leading-[14px] tracking-[-0.45px] whitespace-nowrap">
            20:20
            <br />
            23/04/2018
        </div>
        <svg width="14" height="14" viewBox="0 0 14 14" className="mt-[10px] mr-[20px] ml-[13px]" fill="none" stroke="#e8e8e8">
            <path d="M1 1.5 H13 V10 H9.5 L7 12.5 V10 H1 Z" />
        </svg>
    </div>
);

const App = () => (
    <div className="relative flex h-[720px] w-[1280px] flex-col overflow-hidden bg-[#dfe9f5] font-['Liberation_Sans',Arial,sans-serif] text-[10px] leading-[15px] text-black">
        <TitleBar />
        <MenuBar />
        <Toolbar />
        <div className="flex h-[596px] border-t border-b-2 border-t-[#8fa9d6] border-b-[#7f97c8]">
            <Outline />
            <div className="flex w-[5px] items-center justify-center border-r border-r-[#4a6cb4] bg-linear-to-r from-[#c3dbf5] to-[#7fa9dc]">
                <div className="h-[10px] w-[2px] border-l-2 border-dotted border-[#2c4876]" />
            </div>
            <main className="flex-1 border-t border-[#2c4a98] bg-white pt-[9px] pl-[21px]">
                <CaseProcessing />
                <Crosstabulation />
                <ChiSquare />
            </main>
            <Scrollbar />
            <div className="w-[3px] border-l border-[#12207e] bg-[#5f88d2]" />
        </div>
        <StatusBar />
        <Taskbar />
        <Recorder />
    </div>
);

export default App;
